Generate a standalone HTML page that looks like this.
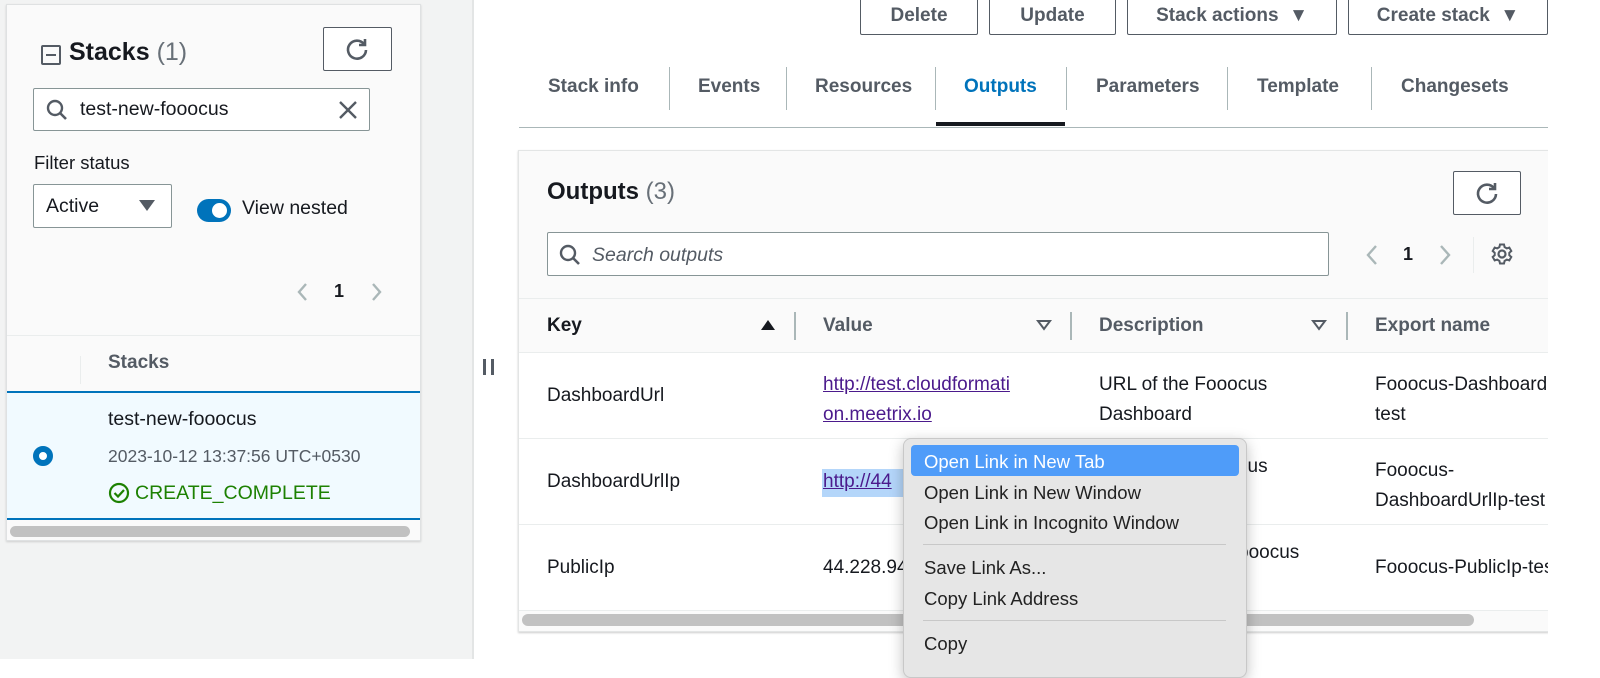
<!DOCTYPE html>
<html><head><meta charset="utf-8"><style>
*{box-sizing:border-box;margin:0;padding:0}
body{width:1600px;height:659px;overflow:hidden;background:#fff;font-family:"Liberation Sans",sans-serif;color:#16191f;position:relative;font-size:19px}
.a{position:absolute}
.btn{position:absolute;border:1px solid #545b64;border-radius:2px;background:#fff;color:#545b64;font-weight:bold;font-size:19px;text-align:center;line-height:36px;height:38px}
.tab{position:absolute;top:76px;font-weight:bold;font-size:19px;color:#545b64}
.sep{position:absolute;width:1px;background:#aab7b8}
.hdr{position:absolute;top:315px;font-weight:bold;font-size:19px;color:#16191f}
.lnk{color:#4b1a8c;text-decoration:underline}
.mi{position:absolute;left:924px;font-size:18.5px;color:#222}
</style></head><body>
<div class="a" style="left:0;top:0;width:474px;height:659px;background:#f2f3f3;border-right:2px solid #e3e5e5"></div>
<div class="a" style="left:6px;top:4px;width:415px;height:537px;background:#fafafa;border:1px solid #dfe1e2;box-shadow:0 1px 2px rgba(0,0,0,.15)"></div>
<div class="a" style="left:41px;top:45px;width:20px;height:20px;border:2px solid #545b64;border-radius:2px"></div>
<div class="a" style="left:46px;top:54px;width:10px;height:2px;background:#545b64"></div>
<div class="a" style="left:69px;top:38px;font-size:25px;font-weight:bold">Stacks <span style="font-weight:normal;color:#687078">(1)</span></div>
<div class="btn" style="left:323px;top:27px;width:69px;height:44px"></div>
<svg class="a" style="left:344px;top:36px" width="26" height="26" viewBox="0 0 26 26"><path d="M20 8 A9 9 0 1 0 22 14" fill="none" stroke="#545b64" stroke-width="2.6"/><path d="M21 3 V9 H15" fill="none" stroke="#545b64" stroke-width="2.6"/></svg>
<div class="a" style="left:33px;top:88px;width:337px;height:43px;border:1px solid #879596;border-radius:2px;background:#fff"></div>
<svg class="a" style="left:46px;top:99px" width="22" height="22"><circle cx="9" cy="9" r="7" fill="none" stroke="#545b64" stroke-width="2.4"/><path d="M14 14 L20 20" stroke="#545b64" stroke-width="2.6"/></svg>
<div class="a" style="left:80px;top:98px;font-size:19.5px">test-new-fooocus</div>
<svg class="a" style="left:337px;top:99px" width="22" height="22"><path d="M3 3 L19 19 M19 3 L3 19" stroke="#545b64" stroke-width="2.4"/></svg>
<div class="a" style="left:34px;top:152px;font-size:18.5px">Filter status</div>
<div class="a" style="left:33px;top:184px;width:139px;height:44px;border:1px solid #879596;border-radius:2px;background:#fff"></div>
<div class="a" style="left:46px;top:195px;font-size:19.5px">Active</div>
<svg class="a" style="left:138px;top:199px" width="18" height="14"><path d="M1 1 H17 L9 12 Z" fill="#545b64"/></svg>
<div class="a" style="left:197px;top:199px;width:34px;height:23px;border-radius:12px;background:#0073bb"></div>
<div class="a" style="left:212px;top:203px;width:15px;height:15px;border-radius:50%;background:#fff"></div>
<div class="a" style="left:242px;top:197px;font-size:19.5px">View nested</div>
<svg class="a" style="left:295px;top:282px" width="90" height="20"><path d="M11 2 L4 10 L11 18" fill="none" stroke="#aab7b8" stroke-width="2.4"/><path d="M78 2 L85 10 L78 18" fill="none" stroke="#aab7b8" stroke-width="2.4"/></svg>
<div class="a" style="left:334px;top:281px;font-weight:bold;font-size:18px">1</div>
<div class="a" style="left:7px;top:335px;width:413px;height:1px;background:#eaeded"></div>
<div class="a" style="left:80px;top:356px;width:1px;height:28px;background:#eaeded"></div>
<div class="a" style="left:108px;top:352px;font-weight:bold;font-size:19px;color:#545b64">Stacks</div>
<div class="a" style="left:7px;top:391px;width:413px;height:129px;background:#f1faff;border-top:2px solid #0073bb;border-bottom:2px solid #0073bb"></div>
<div class="a" style="left:33px;top:446px;width:20px;height:20px;border-radius:50%;border:6px solid #0073bb;background:#fff"></div>
<div class="a" style="left:108px;top:408px;font-size:19.5px">test-new-fooocus</div>
<div class="a" style="left:108px;top:446px;font-size:17.5px;color:#545b64">2023-10-12 13:37:56 UTC+0530</div>
<svg class="a" style="left:108px;top:482px" width="22" height="22"><circle cx="11" cy="11" r="9" fill="none" stroke="#1d8102" stroke-width="2.2"/><path d="M6.5 11 L10 14.5 L16 8" fill="none" stroke="#1d8102" stroke-width="2.2"/></svg>
<div class="a" style="left:135px;top:482px;font-size:19.5px;color:#1d8102">CREATE_COMPLETE</div>
<div class="a" style="left:10px;top:526px;width:400px;height:11px;border-radius:6px;background:#c1c1c1"></div>
<div class="a" style="left:483px;top:359px;width:3px;height:16px;background:#545b64"></div>
<div class="a" style="left:491px;top:359px;width:3px;height:16px;background:#545b64"></div>
<div class="btn" style="left:860px;top:-3px;width:118px">Delete</div>
<div class="btn" style="left:989px;top:-3px;width:127px">Update</div>
<div class="btn" style="left:1127px;top:-3px;width:210px">Stack actions &nbsp;▼</div>
<div class="btn" style="left:1348px;top:-3px;width:200px">Create stack &nbsp;▼</div>
<div class="tab" style="left:548px">Stack info</div>
<div class="sep" style="left:669px;top:67px;height:43px"></div>
<div class="tab" style="left:698px">Events</div>
<div class="sep" style="left:786px;top:67px;height:43px"></div>
<div class="tab" style="left:815px">Resources</div>
<div class="sep" style="left:935px;top:67px;height:43px"></div>
<div class="tab" style="left:964px;color:#0073bb">Outputs</div>
<div class="sep" style="left:1066px;top:67px;height:43px"></div>
<div class="tab" style="left:1096px">Parameters</div>
<div class="sep" style="left:1227px;top:67px;height:43px"></div>
<div class="tab" style="left:1257px">Template</div>
<div class="sep" style="left:1371px;top:67px;height:43px"></div>
<div class="tab" style="left:1401px">Changesets</div>
<div class="a" style="left:519px;top:127px;width:1029px;height:1px;background:#aab7b8"></div>
<div class="a" style="left:936px;top:122px;width:129px;height:4px;background:#16191f"></div>
<div class="a" style="left:518px;top:150px;width:1031px;height:482px;background:#fafafa;border:1px solid #e3e5e5;box-shadow:0 1px 2px rgba(0,0,0,.2)"></div>
<div class="a" style="left:547px;top:178px;font-size:24px;font-weight:bold">Outputs <span style="font-weight:normal;color:#687078">(3)</span></div>
<div class="btn" style="left:1453px;top:171px;width:68px;height:44px"></div>
<svg class="a" style="left:1474px;top:180px" width="26" height="26" viewBox="0 0 26 26"><path d="M20 8 A9 9 0 1 0 22 14" fill="none" stroke="#545b64" stroke-width="2.6"/><path d="M21 3 V9 H15" fill="none" stroke="#545b64" stroke-width="2.6"/></svg>
<div class="a" style="left:547px;top:232px;width:782px;height:44px;border:1px solid #879596;border-radius:2px;background:#fff"></div>
<svg class="a" style="left:559px;top:244px" width="22" height="22"><circle cx="9" cy="9" r="7" fill="none" stroke="#545b64" stroke-width="2.4"/><path d="M14 14 L20 20" stroke="#545b64" stroke-width="2.6"/></svg>
<div class="a" style="left:592px;top:244px;font-size:19.5px;font-style:italic;color:#545b64">Search outputs</div>
<svg class="a" style="left:1362px;top:244px" width="95" height="22"><path d="M14 2 L6 11 L14 20" fill="none" stroke="#aab7b8" stroke-width="2.4"/><path d="M79 2 L87 11 L79 20" fill="none" stroke="#aab7b8" stroke-width="2.4"/></svg>
<div class="a" style="left:1403px;top:244px;font-weight:bold;font-size:18px">1</div>
<div class="a" style="left:1473px;top:237px;width:1px;height:36px;background:#eaeded"></div>
<svg class="a" style="left:1490px;top:242px" width="24" height="24" viewBox="0 0 24 24"><circle cx="12" cy="12" r="3.5" fill="none" stroke="#545b64" stroke-width="2.2"/><path d="M10 2.5h4l.6 2.6 2.2 1.3 2.5-.8 2 3.4-2 1.8v2.4l2 1.8-2 3.4-2.5-.8-2.2 1.3-.6 2.6h-4l-.6-2.6-2.2-1.3-2.5.8-2-3.4 2-1.8v-2.4l-2-1.8 2-3.4 2.5.8 2.2-1.3z" fill="none" stroke="#545b64" stroke-width="2"/></svg>
<div class="a" style="left:519px;top:298px;width:1029px;height:1px;background:#eaeded"></div>
<div class="hdr" style="left:547px">Key</div>
<svg class="a" style="left:760px;top:319px" width="16" height="12"><path d="M1 11 H15 L8 1 Z" fill="#16191f"/></svg>
<div class="a" style="left:794px;top:312px;width:2px;height:28px;background:#aab7b8"></div>
<div class="hdr" style="left:823px;color:#545b64">Value</div>
<svg class="a" style="left:1036px;top:319px" width="16" height="12"><path d="M2 2 H14 L8 10 Z" fill="none" stroke="#545b64" stroke-width="2"/></svg>
<div class="a" style="left:1070px;top:312px;width:2px;height:28px;background:#aab7b8"></div>
<div class="hdr" style="left:1099px;color:#545b64">Description</div>
<svg class="a" style="left:1311px;top:319px" width="16" height="12"><path d="M2 2 H14 L8 10 Z" fill="none" stroke="#545b64" stroke-width="2"/></svg>
<div class="a" style="left:1346px;top:312px;width:2px;height:28px;background:#aab7b8"></div>
<div class="hdr" style="left:1375px;color:#545b64">Export name</div>
<div class="a" style="left:519px;top:352px;width:1029px;height:258px;background:#fff"></div>
<div class="a" style="left:519px;top:352px;width:1029px;height:1px;background:#eaeded"></div>
<div class="a" style="left:519px;top:438px;width:1029px;height:1px;background:#eaeded"></div>
<div class="a" style="left:519px;top:524px;width:1029px;height:1px;background:#eaeded"></div>
<div class="a" style="left:519px;top:610px;width:1029px;height:1px;background:#eaeded"></div>
<div class="a" style="left:547px;top:385px">DashboardUrl</div>
<div class="a" style="left:823px;top:370px;line-height:30px"><span class="lnk">http://test.cloudformati</span><br><span class="lnk">on.meetrix.io</span></div>
<div class="a" style="left:1099px;top:370px;line-height:30px">URL of the Fooocus<br>Dashboard</div>
<div class="a" style="left:1375px;top:370px;line-height:30px;white-space:nowrap">Fooocus-DashboardUrl-<br>test</div>
<div class="a" style="left:547px;top:471px">DashboardUrlIp</div>
<div class="a" style="left:822px;top:469px;width:82px;height:28px;background:#b4d6fa"></div>
<div class="a" style="left:823px;top:471px"><span class="lnk">http://44</span></div>
<div class="a" style="left:1238px;top:456px">cus</div>
<div class="a" style="left:1375px;top:456px;line-height:30px;white-space:nowrap">Fooocus-<br>DashboardUrlIp-test</div>
<div class="a" style="left:547px;top:557px">PublicIp</div>
<div class="a" style="left:823px;top:557px">44.228.94</div>
<div class="a" style="left:1238px;top:542px">ooocus</div>
<div class="a" style="left:1375px;top:557px;white-space:nowrap">Fooocus-PublicIp-test</div>
<div class="a" style="left:1548px;top:0;width:52px;height:659px;background:#fff"></div>
<div class="a" style="left:522px;top:614px;width:952px;height:12px;border-radius:6px;background:#c1c1c1"></div>
<div class="a" style="left:903px;top:438px;width:344px;height:240px;background:#e6e6e6;border:1px solid #c8c8c8;border-radius:8px;box-shadow:0 4px 14px rgba(0,0,0,.25)"></div>
<div class="a" style="left:911px;top:445px;width:328px;height:31px;background:#4f9cf9;border-radius:4px"></div>
<div class="mi" style="top:451px;color:#fff">Open Link in New Tab</div>
<div class="mi" style="top:482px">Open Link in New Window</div>
<div class="mi" style="top:512px">Open Link in Incognito Window</div>
<div class="a" style="left:923px;top:544px;width:303px;height:1px;background:#c8c8c8"></div>
<div class="mi" style="top:557px">Save Link As...</div>
<div class="mi" style="top:588px">Copy Link Address</div>
<div class="a" style="left:923px;top:620px;width:303px;height:1px;background:#c8c8c8"></div>
<div class="mi" style="top:633px">Copy</div>
</body></html>
